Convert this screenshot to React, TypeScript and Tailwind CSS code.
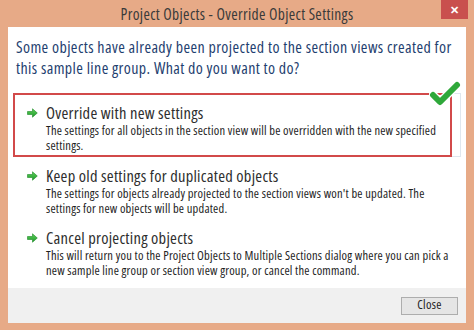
import React from "react";

function Arrow() {
  return (
    <svg width="11" height="10" viewBox="0 0 11 10" className="shrink-0">
      <defs>
        <linearGradient id="ga" x1="0" y1="0" x2="0" y2="1">
          <stop offset="0" stopColor="#5fd05a" />
          <stop offset="1" stopColor="#1e9a2a" />
        </linearGradient>
      </defs>
      <path d="M0.5 3.5 H5.5 V0.8 L10.3 5 L5.5 9.2 V6.5 H0.5 Z" fill="url(#ga)" stroke="#1c8a26" strokeWidth="0.6" strokeLinejoin="round" />
    </svg>
  );
}

function OptionBody({ title, lines }: { title: string; lines: string[] }) {
  return (
    <>
      <div className="flex h-[20px] items-center gap-[8px]">
        <Arrow />
        <span className="text-[16.5px] leading-[20px] tracking-[0.25px] text-[#2e2e2e]">{title}</span>
      </div>
      <div className="pl-[19px] text-[12.5px] leading-[15px] tracking-[0.2px] text-[#1e1e1e]">
        {lines.map((l, i) => (
          <div key={i} className="whitespace-nowrap">{l}</div>
        ))}
      </div>
    </>
  );
}

export default function App() {
  return (
    <div className="flex h-[330px] w-[474px] flex-col bg-[#e7aa87] font-['Open_Sans',sans-serif] font-stretch-condensed">
      <div className="relative flex h-[27px] items-center justify-center">
        <span className="text-[15.5px] leading-[20px] tracking-[0.35px] text-[#3a3a3a]">Project Objects - Override Object Settings</span>
        <div className="absolute right-[6px] top-0 flex h-[19px] w-[27px] items-center justify-center bg-[#c9504e] text-[11px] font-bold leading-none text-white">
          ✕
        </div>
      </div>
      <div className="mx-[8px] mb-[7px] flex flex-1 flex-col bg-white">
        <div className="flex-1">
          <div className="px-[8px] pt-[10px] text-[16px] leading-[21px] tracking-[0.4px] text-[#1f3f70]">
            <div className="whitespace-nowrap">Some objects have already been projected to the section views created for</div>
            <div className="whitespace-nowrap">this sample line group. What do you want to do?</div>
          </div>
          <div className="relative mx-[5px] mt-[14px] h-[64px] border border-[#dfe7ee] pl-[13px] pt-[9px]">
            <OptionBody
              title="Override with new settings"
              lines={[
                "The settings for all objects in the section view will be overridden with the new specified",
                "settings.",
              ]}
            />
            <div className="absolute inset-y-[-1px] left-[-1px] right-[8px] border-2 border-[#d24a4a]" />
            <svg width="32" height="26" viewBox="0 0 32 26" className="absolute right-[-1px] top-[-13px]">
              <polyline points="4,14 11,21 28,4" fill="none" stroke="#ffffff" strokeWidth="8.5" strokeLinecap="round" strokeLinejoin="round" />
              <polyline points="4,14 11,21 28,4" fill="none" stroke="#2fa83a" strokeWidth="6" strokeLinecap="round" strokeLinejoin="round" />
            </svg>
          </div>
          <div className="mx-[5px] h-[62px] pl-[14px] pt-[9px]">
            <OptionBody
              title="Keep old settings for duplicated objects"
              lines={[
                "The settings for objects already projected to the section views won't be updated.  The",
                "settings for new objects will be updated.",
              ]}
            />
          </div>
          <div className="mx-[5px] h-[62px] pl-[14px] pt-[9px]">
            <OptionBody
              title="Cancel projecting objects"
              lines={[
                "This will return you to the Project Objects to Multiple Sections dialog where you can pick a",
                "new sample line group or section view group, or cancel the command.",
              ]}
            />
          </div>
        </div>
        <div className="flex h-[35px] items-center justify-end bg-[#f0f0f0] pr-[8px]">
          <div className="flex h-[18px] w-[57px] items-center justify-center border border-[#adadad] bg-[#e5e5e5] text-[12.5px] tracking-[0.3px] text-[#222]">
            Close
          </div>
        </div>
      </div>
    </div>
  );
}
